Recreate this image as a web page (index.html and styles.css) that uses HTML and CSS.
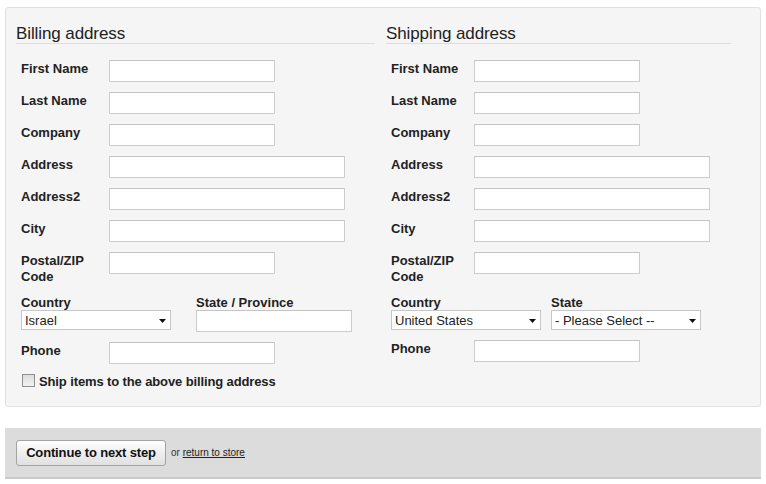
FILE: index.html
```html
<!DOCTYPE html>
<html>
<head>
<meta charset="utf-8">
<link rel="stylesheet" href="styles.css">
</head>
<body>
<div class="page">
  <div class="panel">
    <div class="col col-billing">
      <h2 class="heading">Billing address</h2>
      <div class="row"><label class="lbl">First Name</label><input class="field" type="text"></div>
      <div class="row"><label class="lbl">Last Name</label><input class="field" type="text"></div>
      <div class="row"><label class="lbl">Company</label><input class="field" type="text"></div>
      <div class="row"><label class="lbl">Address</label><input class="field wide" type="text"></div>
      <div class="row"><label class="lbl">Address2</label><input class="field wide" type="text"></div>
      <div class="row"><label class="lbl">City</label><input class="field wide" type="text"></div>
      <div class="row"><label class="lbl">Postal/ZIP<br>Code</label><input class="field" type="text"></div>
      <div class="row pair">
        <div class="sub sub-first">
          <label class="lbl-top">Country</label>
          <span class="sel-wrap">
            <select class="sel"><option>Israel</option></select>
            <svg class="arrow" width="7" height="4" viewBox="0 0 7 4"><polygon points="0,0 7,0 3.5,4" fill="#111"/></svg>
          </span>
        </div>
        <div class="sub">
          <label class="lbl-top">State / Province</label>
          <input class="field state" type="text">
        </div>
      </div>
      <div class="row"><label class="lbl">Phone</label><input class="field" type="text"></div>
      <div class="row check-row">
        <input class="chk" type="checkbox" id="ship">
        <label class="chk-lbl" for="ship">Ship items to the above billing address</label>
      </div>
    </div>
    <div class="col col-shipping">
      <h2 class="heading">Shipping address</h2>
      <div class="row"><label class="lbl">First Name</label><input class="field" type="text"></div>
      <div class="row"><label class="lbl">Last Name</label><input class="field" type="text"></div>
      <div class="row"><label class="lbl">Company</label><input class="field" type="text"></div>
      <div class="row"><label class="lbl">Address</label><input class="field wide" type="text"></div>
      <div class="row"><label class="lbl">Address2</label><input class="field wide" type="text"></div>
      <div class="row"><label class="lbl">City</label><input class="field wide" type="text"></div>
      <div class="row"><label class="lbl">Postal/ZIP<br>Code</label><input class="field" type="text"></div>
      <div class="row pair">
        <div class="sub sub-first">
          <label class="lbl-top">Country</label>
          <span class="sel-wrap">
            <select class="sel"><option>United States</option></select>
            <svg class="arrow" width="7" height="4" viewBox="0 0 7 4"><polygon points="0,0 7,0 3.5,4" fill="#111"/></svg>
          </span>
        </div>
        <div class="sub">
          <label class="lbl-top">State</label>
          <span class="sel-wrap">
            <select class="sel"><option>- Please Select --</option></select>
            <svg class="arrow" width="7" height="4" viewBox="0 0 7 4"><polygon points="0,0 7,0 3.5,4" fill="#111"/></svg>
          </span>
        </div>
      </div>
      <div class="row"><label class="lbl">Phone</label><input class="field" type="text"></div>
    </div>
  </div>
  <div class="bar">
    <button class="btn" type="button">Continue to next step</button>
    <span class="or">or <a class="link" href="#">return to store</a></span>
  </div>
</div>
</body>
</html>
```

FILE: styles.css
```css
html, body {
  margin: 0;
  padding: 0;
  background: #ffffff;
}

body {
  font-family: "Liberation Sans", Arial, sans-serif;
  color: #222222;
}

.page {
  padding: 7px 0 0 5px;
  width: 756px;
}

.panel {
  box-sizing: border-box;
  width: 756px;
  background: #f5f5f5;
  border: 1px solid #e1e1e1;
  border-radius: 3px;
  padding: 16px 0 16px 10px;
  display: flex;
  align-items: flex-start;
  gap: 11px;
}

.col {
  display: flex;
  flex-direction: column;
}

.col-billing {
  width: 359px;
}

.col-shipping {
  width: 345px;
}

.heading {
  margin: 0 0 16px 0;
  padding-top: 1px;
  font-size: 17px;
  font-weight: normal;
  line-height: 18px;
  color: #222222;
  border-bottom: 1px solid #dddddd;
  letter-spacing: -0.1px;
}

.row {
  display: flex;
  align-items: flex-start;
  padding-left: 5px;
  margin-bottom: 10px;
}

.lbl {
  width: 88px;
  flex: none;
  font-size: 13px;
  font-weight: bold;
  line-height: 16px;
  padding-top: 1px;
  margin-bottom: -1px;
}

.col-shipping .lbl {
  width: 83px;
}

.field {
  box-sizing: border-box;
  width: 166px;
  height: 22px;
  margin: 0;
  padding: 0 3px;
  border: 1px solid #cccccc;
  border-top-color: #c4c4c4;
  background: #ffffff;
  font-family: "Liberation Sans", Arial, sans-serif;
  font-size: 13px;
  outline: none;
}

.field.wide {
  width: 236px;
}

.field.state {
  width: 156px;
}

.sub {
  display: flex;
  flex-direction: column;
}

.col-billing .sub-first {
  width: 175px;
}

.col-shipping .sub-first {
  width: 160px;
}

.lbl-top {
  font-size: 13px;
  font-weight: bold;
  line-height: 16px;
  padding-top: 1px;
  margin-bottom: -1px;
}

.sel-wrap {
  position: relative;
  display: block;
  width: 150px;
  height: 20px;
}

.sel {
  -webkit-appearance: none;
  appearance: none;
  box-sizing: border-box;
  width: 150px;
  height: 20px;
  margin: 0;
  padding: 0 14px 0 3px;
  border: 1px solid #c8c8c8;
  border-radius: 0;
  background: #ffffff;
  color: #222222;
  font-family: "Liberation Sans", Arial, sans-serif;
  font-size: 13px;
  outline: none;
}

.arrow {
  position: absolute;
  right: 5px;
  top: 9px;
  pointer-events: none;
}

.check-row {
  margin-bottom: 0;
}

.chk {
  -webkit-appearance: none;
  appearance: none;
  box-sizing: border-box;
  width: 13px;
  height: 13px;
  margin: 0 4px 0 1px;
  border: 1px solid #8f8f8f;
  background: linear-gradient(#dcdcdc, #f2f2f2);
  flex: none;
}

.chk-lbl {
  font-size: 13px;
  font-weight: bold;
  line-height: 16px;
  letter-spacing: -0.12px;
}

.bar {
  box-sizing: border-box;
  width: 756px;
  height: 51px;
  margin-top: 21px;
  background: #dcdcdc;
  border-bottom: 2px solid #cacaca;
  padding: 12px 0 0 11px;
  display: flex;
  align-items: flex-start;
}

.btn {
  box-sizing: border-box;
  width: 150px;
  height: 26px;
  margin: 0;
  padding: 0;
  border: 1px solid #a3a3a3;
  border-radius: 3px;
  background: linear-gradient(#fefefe, #e0e0e0);
  color: #111111;
  font-family: "Liberation Sans", Arial, sans-serif;
  font-size: 13px;
  font-weight: bold;
  line-height: 24px;
  letter-spacing: -0.15px;
  cursor: pointer;
}

.or {
  margin-left: 5px;
  font-size: 10px;
  line-height: 26px;
  color: #333333;
}

.link {
  color: #222222;
  text-decoration: underline;
}
```
